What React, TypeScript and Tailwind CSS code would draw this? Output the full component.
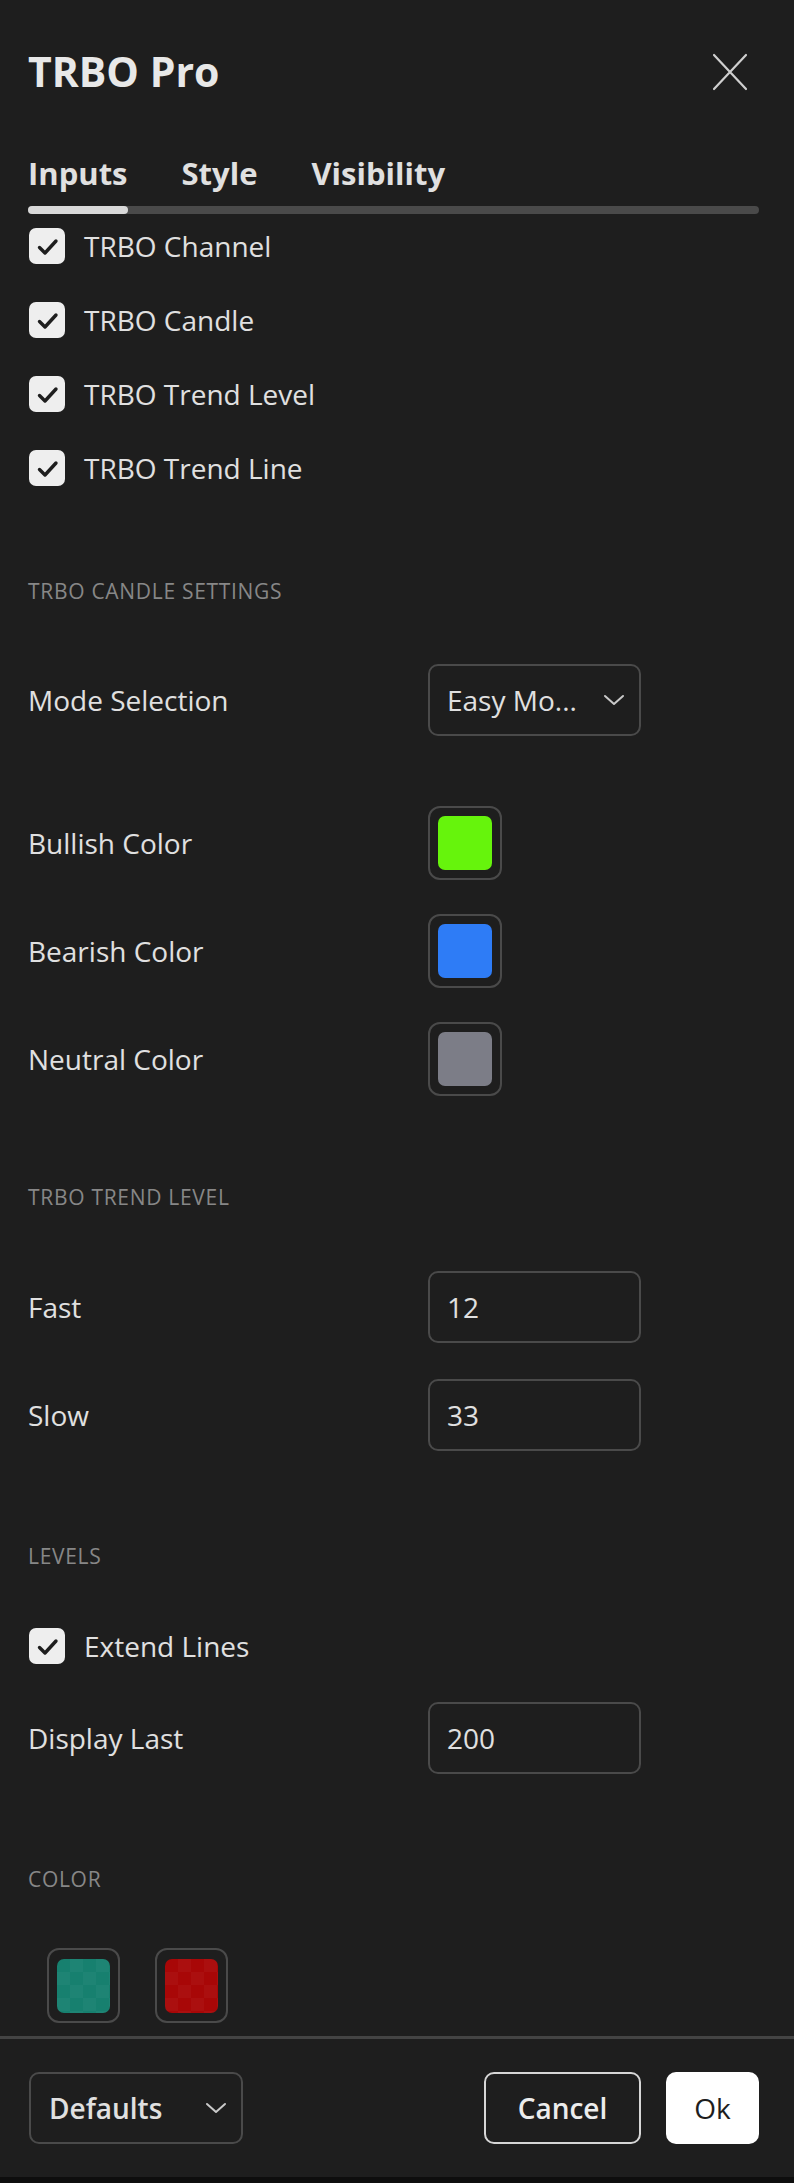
import React from "react";

function Check() {
  return (
    <div className="ml-px flex h-[36px] w-[36px] items-center justify-center rounded-[7px] bg-[#eeeeee]">
      <svg width="36" height="36" viewBox="0 0 36 36" fill="none">
        <path d="M10.5 19.5 L16 25 L27 13" stroke="#1e1e1e" strokeWidth="3.4" strokeLinecap="round" strokeLinejoin="round" />
      </svg>
    </div>
  );
}

function Chevron() {
  return (
    <svg width="22" height="12" viewBox="0 0 22 12" fill="none">
      <path d="M2 2 L11 10 L20 2" stroke="#c9c9c9" strokeWidth="2" strokeLinecap="round" strokeLinejoin="round" />
    </svg>
  );
}

function CheckRow({ label }: { label: string }) {
  return (
    <div className="flex h-[40px] items-center gap-[19px]">
      <Check />
      <span className="text-[28px]">{label}</span>
    </div>
  );
}

function SectionTitle({ children, mt }: { children: React.ReactNode; mt: string }) {
  return (
    <div className={`${mt} flex h-[28px] items-center text-[21px] uppercase tracking-[0.7px] text-[#878787]`}>
      {children}
    </div>
  );
}

function Swatch({ color }: { color: string }) {
  return (
    <div className="flex h-[74px] w-[74px] items-center justify-center rounded-[12px] border-2 border-[#4a4a4a]">
      <div className="h-[54px] w-[54px] rounded-[7px]" style={{ backgroundColor: color }} />
    </div>
  );
}

function CheckerSwatch({ color }: { color: string }) {
  return (
    <div className="flex h-[75px] w-[73px] items-center justify-center rounded-[12px] border-2 border-[#4a4a4a]">
      <div className="h-[54px] w-[53px] rounded-[7px] bg-[repeating-conic-gradient(#ffffff08_0_25%,transparent_0_50%)] bg-[length:26px_26px]" style={{ backgroundColor: color }} />
    </div>
  );
}

function Row({ label, mt, children, h = "h-[72px]" }: { label: string; mt: string; children: React.ReactNode; h?: string }) {
  return (
    <div className={`${mt} ${h} grid grid-cols-[400px_auto] items-center`}>
      <span className="text-[28px]">{label}</span>
      {children}
    </div>
  );
}

function Field({ value }: { value: string }) {
  return (
    <div className="flex h-[72px] w-[213px] items-center rounded-[10px] border-2 border-[#4a4a4a] pl-[17px] text-[28px]">
      {value}
    </div>
  );
}

export default function App() {
  return (
    <div className="flex h-[2183px] w-[794px] flex-col bg-[#1e1e1e] font-['Open_Sans',sans-serif] text-[#e0e0e0]">
      <div className="flex flex-1 flex-col pl-[28px] pr-[35px]">
        <div className="flex h-[144px] items-center justify-between">
          <h1 className="text-[41px] font-bold text-[#e8e8e8]">TRBO Pro</h1>
          <button className="mr-[11px]">
            <svg width="36" height="38" viewBox="0 0 36 38" fill="none">
              <path d="M2 2 L34 36 M34 2 L2 36" stroke="#cfcfcf" strokeWidth="2.2" strokeLinecap="round" />
            </svg>
          </button>
        </div>

        <div className="flex h-[58px] items-center gap-[54px] text-[31px] font-bold">
          <span>Inputs</span>
          <span>Style</span>
          <span>Visibility</span>
        </div>
        <div className="mt-[4px] h-[8px] rounded-full bg-[#4a4a4a]">
          <div className="h-full w-[100px] rounded-full bg-[#d8d8d8]" />
        </div>

        <div className="mt-[12px] flex flex-col gap-[34px]">
          <CheckRow label="TRBO Channel" />
          <CheckRow label="TRBO Candle" />
          <CheckRow label="TRBO Trend Level" />
          <CheckRow label="TRBO Trend Line" />
        </div>

        <SectionTitle mt="mt-[90px]">TRBO Candle Settings</SectionTitle>

        <Row label="Mode Selection" mt="mt-[58px]">
          <div className="flex h-[72px] w-[213px] items-center justify-between rounded-[10px] border-2 border-[#4a4a4a] pl-[17px] pr-[14px] text-[28px]">
            <span>Easy Mo...</span>
            <Chevron />
          </div>
        </Row>

        <Row label="Bullish Color" mt="mt-[70px]" h="h-[74px]">
          <Swatch color="#66f40c" />
        </Row>
        <Row label="Bearish Color" mt="mt-[34px]" h="h-[74px]">
          <Swatch color="#2e7cf6" />
        </Row>
        <Row label="Neutral Color" mt="mt-[34px]" h="h-[74px]">
          <Swatch color="#7c7d87" />
        </Row>

        <SectionTitle mt="mt-[88px]">TRBO Trend Level</SectionTitle>

        <Row label="Fast" mt="mt-[59px]">
          <Field value="12" />
        </Row>
        <Row label="Slow" mt="mt-[36px]">
          <Field value="33" />
        </Row>

        <SectionTitle mt="mt-[92px]">Levels</SectionTitle>

        <div className="mt-[55px]">
          <CheckRow label="Extend Lines" />
        </div>

        <Row label="Display Last" mt="mt-[36px]">
          <Field value="200" />
        </Row>

        <SectionTitle mt="mt-[92px]">Color</SectionTitle>

        <div className="mt-[54px] flex gap-[35px] pl-[19px]">
          <CheckerSwatch color="#17806f" />
          <CheckerSwatch color="#a80707" />
        </div>
      </div>

      <div className="h-[3px] bg-[#444444]" />

      <div className="flex h-[138px] items-center justify-between pl-[29px] pr-[35px]">
        <div className="flex h-[72px] w-[214px] items-center justify-between rounded-[10px] border-2 border-[#4a4a4a] pl-[18px] pr-[14px] text-[28px] font-semibold">
          <span>Defaults</span>
          <Chevron />
        </div>
        <div className="flex items-center gap-[25px]">
          <button className="flex h-[72px] w-[157px] items-center justify-center rounded-[10px] border-2 border-[#d6d6d6] text-[28px] font-semibold text-[#ececec]">
            Cancel
          </button>
          <button className="flex h-[72px] w-[93px] items-center justify-center rounded-[10px] bg-white text-[28px] text-[#1e1e1e]">
            Ok
          </button>
        </div>
      </div>

      <div className="h-[6px] bg-[#0e0e0e]" />
    </div>
  );
}
